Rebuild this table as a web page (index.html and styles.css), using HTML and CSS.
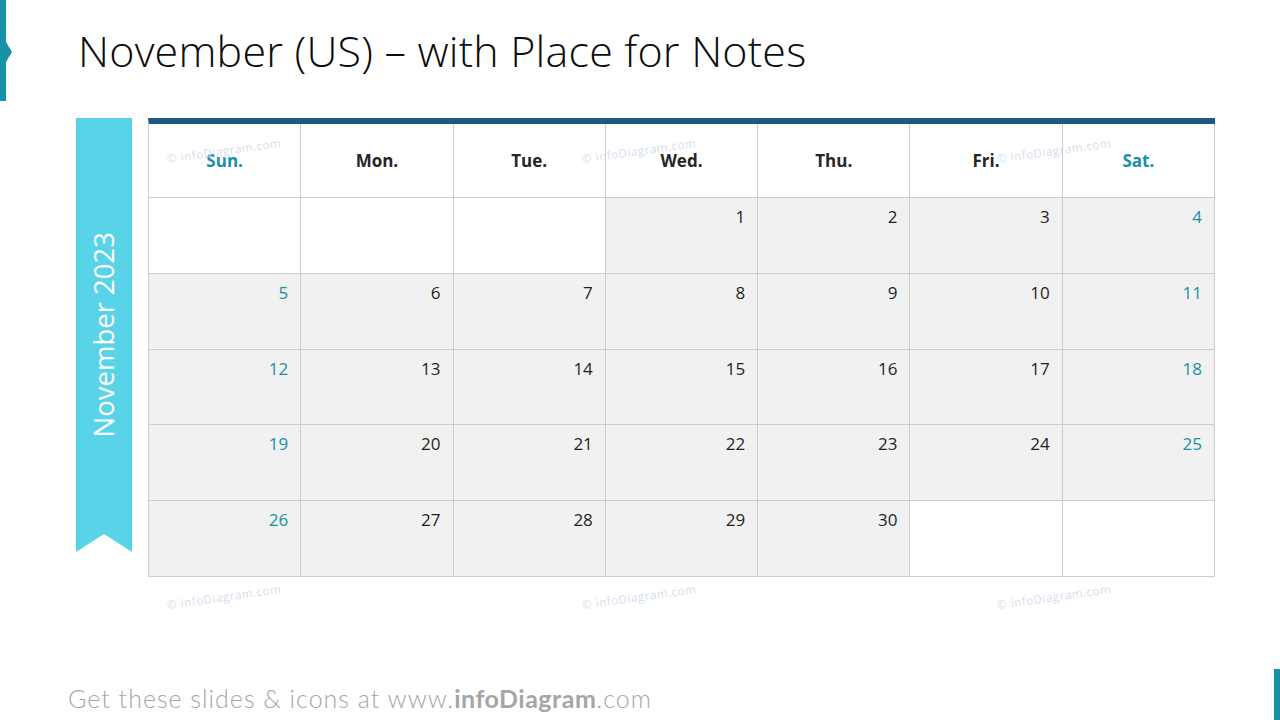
FILE: index.html
```html
<!DOCTYPE html>
<html lang="en">
<head>
<meta charset="utf-8">
<title>November (US) – with Place for Notes</title>
<link rel="stylesheet" href="styles.css">
</head>
<body>
<div class="slide">
  <div class="accent-left"></div>
  <h1 class="title">November (US) – with Place for Notes</h1>
  <div class="main">
    <div class="ribbon"><span class="ribbon-text">November 2023</span></div>
    <div class="calendar">
      <div class="cell head weekend">Sun.</div>
      <div class="cell head">Mon.</div>
      <div class="cell head">Tue.</div>
      <div class="cell head">Wed.</div>
      <div class="cell head">Thu.</div>
      <div class="cell head">Fri.</div>
      <div class="cell head weekend">Sat.</div>

      <div class="cell empty"></div>
      <div class="cell empty"></div>
      <div class="cell empty"></div>
      <div class="cell day">1</div>
      <div class="cell day">2</div>
      <div class="cell day">3</div>
      <div class="cell day weekend">4</div>

      <div class="cell day weekend">5</div>
      <div class="cell day">6</div>
      <div class="cell day">7</div>
      <div class="cell day">8</div>
      <div class="cell day">9</div>
      <div class="cell day">10</div>
      <div class="cell day weekend">11</div>

      <div class="cell day weekend">12</div>
      <div class="cell day">13</div>
      <div class="cell day">14</div>
      <div class="cell day">15</div>
      <div class="cell day">16</div>
      <div class="cell day">17</div>
      <div class="cell day weekend">18</div>

      <div class="cell day weekend">19</div>
      <div class="cell day">20</div>
      <div class="cell day">21</div>
      <div class="cell day">22</div>
      <div class="cell day">23</div>
      <div class="cell day">24</div>
      <div class="cell day weekend">25</div>

      <div class="cell day weekend">26</div>
      <div class="cell day">27</div>
      <div class="cell day">28</div>
      <div class="cell day">29</div>
      <div class="cell day">30</div>
      <div class="cell empty"></div>
      <div class="cell empty"></div>
    </div>
  </div>
  <div class="footer">Get these slides &amp; icons at www.<b>infoDiagram</b>.com</div>
  <div class="accent-right"></div>

  <span class="wm wm1">© infoDiagram.com</span>
  <span class="wm wm2">© infoDiagram.com</span>
  <span class="wm wm3">© infoDiagram.com</span>
  <span class="wm wm4">© infoDiagram.com</span>
  <span class="wm wm5">© infoDiagram.com</span>
  <span class="wm wm6">© infoDiagram.com</span>
</div>
</body>
</html>
```
FILE: styles.css
```css
* { box-sizing: border-box; }
html, body { margin: 0; padding: 0; background: #fff; }
body { font-family: "Open Sans", "Liberation Sans", sans-serif; }

.slide {
  position: relative;
  width: 1280px;
  height: 720px;
  overflow: hidden;
  background: #fff;
}

.accent-left {
  position: absolute;
  left: 0;
  top: 0;
  width: 6px;
  height: 101px;
  background: #1793a8;
}
.accent-left::after {
  content: "";
  position: absolute;
  left: 6px;
  top: 42px;
  border-top: 10px solid transparent;
  border-bottom: 10px solid transparent;
  border-left: 6px solid #1793a8;
}

.accent-right {
  position: absolute;
  right: 0;
  bottom: 0;
  width: 6px;
  height: 51px;
  background: #1793a8;
}

.title {
  margin: 0;
  padding: 22px 0 0 78px;
  height: 118px;
  font-family: "Open Sans", sans-serif;
  font-weight: 300;
  font-size: 43px;
  line-height: 58px;
  color: #0d0d0d;
  letter-spacing: 0.2px;
  white-space: nowrap;
}

.main {
  display: flex;
  align-items: flex-start;
  gap: 16px;
  padding-left: 76px;
}

.ribbon {
  width: 56px;
  height: 434px;
  background: #59d3e8;
  clip-path: polygon(0 0, 100% 0, 100% 100%, 50% calc(100% - 18px), 0 100%);
  display: flex;
  align-items: center;
  justify-content: center;
}
.ribbon-text {
  writing-mode: vertical-rl;
  transform: rotate(180deg);
  color: #fff;
  font-size: 27.5px;
  line-height: 32px;
  white-space: nowrap;
}

.calendar {
  width: 1067px;
  display: grid;
  grid-template-columns: repeat(7, 1fr);
  grid-template-rows: 74px repeat(5, 75.8px);
  border-top: 6px solid #1b5a80;
  border-left: 1px solid #cdcdcd;
}

.cell {
  border-right: 1px solid #cdcdcd;
  border-bottom: 1px solid #cdcdcd;
  color: #1f1f1f;
}

.head {
  display: flex;
  align-items: center;
  justify-content: center;
  font-weight: 700;
  font-size: 17px;
  background: #fff;
  color: #262626;
}

.day {
  background: #f1f1f1;
  text-align: right;
  padding: 8px 12px 0 0;
  font-size: 17px;
  line-height: 22px;
}

.empty { background: #fff; }

.cell.weekend { color: #1a8fa6; }

.footer {
  position: absolute;
  left: 68px;
  top: 683px;
  font-family: "Lato", "Liberation Sans", sans-serif;
  font-weight: 300;
  font-size: 25px;
  line-height: 30px;
  letter-spacing: 1px;
  color: #a6a6a6;
  white-space: nowrap;
}
.footer b { font-weight: 700; letter-spacing: 0.5px; }

.wm {
  position: absolute;
  font-size: 11.5px;
  color: #d3deeb;
  letter-spacing: 0.6px;
  transform: rotate(-8deg);
  transform-origin: left bottom;
  white-space: nowrap;
}
.wm1 { left: 168px; top: 151px; }
.wm2 { left: 583px; top: 151px; }
.wm3 { left: 998px; top: 151px; }
.wm4 { left: 168px; top: 597px; }
.wm5 { left: 583px; top: 597px; }
.wm6 { left: 998px; top: 597px; }
```
